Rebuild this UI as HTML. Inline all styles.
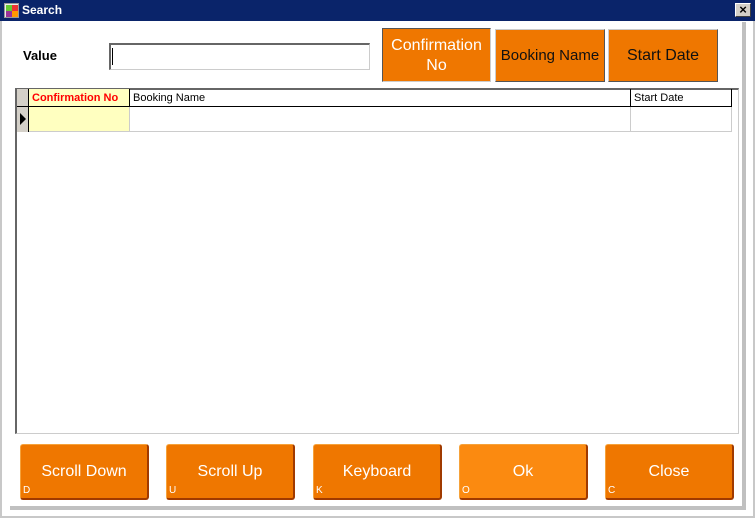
<!DOCTYPE html>
<html><head><style>
body{margin:0;width:755px;height:518px;background:#fff;position:relative;overflow:hidden;font-family:"Liberation Sans",sans-serif}
div{position:absolute;box-sizing:border-box}
.tb{left:0;top:0;width:755px;height:21px;background:#0a246a;color:#fff;font-weight:bold;font-size:12px;line-height:21px;padding-left:22px}
.ob{background:#ef7700;border:1px solid #555;border-top-color:#777;color:#fff;font-size:16px;text-align:center;display:flex;align-items:center;justify-content:center;line-height:20px}
.bb{top:444px;width:129px;height:56px;background:#ef7700;border:1px solid #f6a23a;border-right:2px solid #a03a00;border-bottom:2px solid #a03a00;border-radius:3px;color:#fff;font-size:16px;text-align:center;line-height:54px}
.bb span{position:absolute;left:2px;bottom:2px;font-size:10px;line-height:10px}
.h{top:89px;height:18px;border-right:1px solid #000;font-size:11px;line-height:18px;padding-left:3px}
</style></head><body>
<div class="tb">Search</div>
<div style="left:4px;top:3px;width:15px;height:15px;background:#eee;border:1px solid #999">
<div style="left:1px;top:1px;width:6px;height:6px;background:#6c3"></div><div style="left:7px;top:1px;width:6px;height:6px;background:#e33"></div><div style="left:1px;top:7px;width:6px;height:6px;background:#939"></div><div style="left:7px;top:7px;width:6px;height:6px;background:#f90"></div></div>
<div style="left:735px;top:3px;width:16px;height:14px;background:#d4d0c8;border:1px solid #fff;border-right-color:#404040;border-bottom-color:#404040;font-size:13px;line-height:12px;text-align:center;font-weight:bold">×</div>
<div style="left:0;top:21px;width:2px;height:497px;background:#c8c8c8"></div>
<div style="left:742px;top:22px;width:4px;height:486px;background:#c0c0c0"></div>
<div style="left:10px;top:506px;width:736px;height:4px;background:#c0c0c0"></div>
<div style="left:753px;top:21px;width:2px;height:497px;background:#c8c8c8"></div>
<div style="left:0;top:516px;width:755px;height:2px;background:#c8c8c8"></div>
<div style="left:23px;top:48px;font-size:13px;font-weight:bold">Value</div>
<div style="left:109px;top:43px;width:261px;height:27px;border:1px solid #ccc;border-top:2px solid #666;border-left:2px solid #666"><div style="left:1px;top:3px;width:1px;height:17px;background:#000"></div></div>
<div class="ob" style="left:382px;top:28px;width:109px;height:54px;border-color:#555 #ccc #ccc #555;padding-top:2px">Confirmation<br>No</div>
<div class="ob" style="left:495px;top:29px;width:110px;height:53px;color:#111;border-color:#ccc #555 #555 #ccc;font-size:15px">Booking Name</div>
<div class="ob" style="left:608px;top:29px;width:110px;height:53px;color:#111;border-color:#ccc #555 #555 #ccc">Start Date</div>
<div style="left:15px;top:88px;width:724px;height:346px;border:1px solid #ccc;border-top:2px solid #666;border-left:2px solid #666"></div>
<div style="left:17px;top:89px;width:12px;height:43px;background:#d4d0c8;border-right:1px solid #000"></div>
<div style="left:17px;top:106px;width:715px;height:1px;background:#000"></div>
<div style="left:20px;top:113px;width:0;height:0;border-left:6px solid #000;border-top:6px solid transparent;border-bottom:6px solid transparent"></div>
<div class="h" style="left:29px;width:101px;height:17px;background:#ffffc0;color:#f00;font-weight:bold">Confirmation No</div>
<div class="h" style="left:130px;width:501px;height:17px">Booking Name</div>
<div class="h" style="left:631px;width:101px;height:17px">Start Date</div>
<div style="left:29px;top:107px;width:101px;height:25px;background:#ffffc0;border-right:1px solid #ccc;border-bottom:1px solid #ccc"></div>
<div style="left:130px;top:107px;width:501px;height:25px;border-right:1px solid #ccc;border-bottom:1px solid #ccc"></div>
<div style="left:631px;top:107px;width:101px;height:25px;border-right:1px solid #ccc;border-bottom:1px solid #ccc"></div>
<div class="bb" style="left:20px">Scroll Down<span>D</span></div>
<div class="bb" style="left:166px">Scroll Up<span>U</span></div>
<div class="bb" style="left:313px">Keyboard<span>K</span></div>
<div class="bb" style="left:459px;background:#fb8a10">Ok<span>O</span></div>
<div class="bb" style="left:605px">Close<span>C</span></div>
</body></html>
